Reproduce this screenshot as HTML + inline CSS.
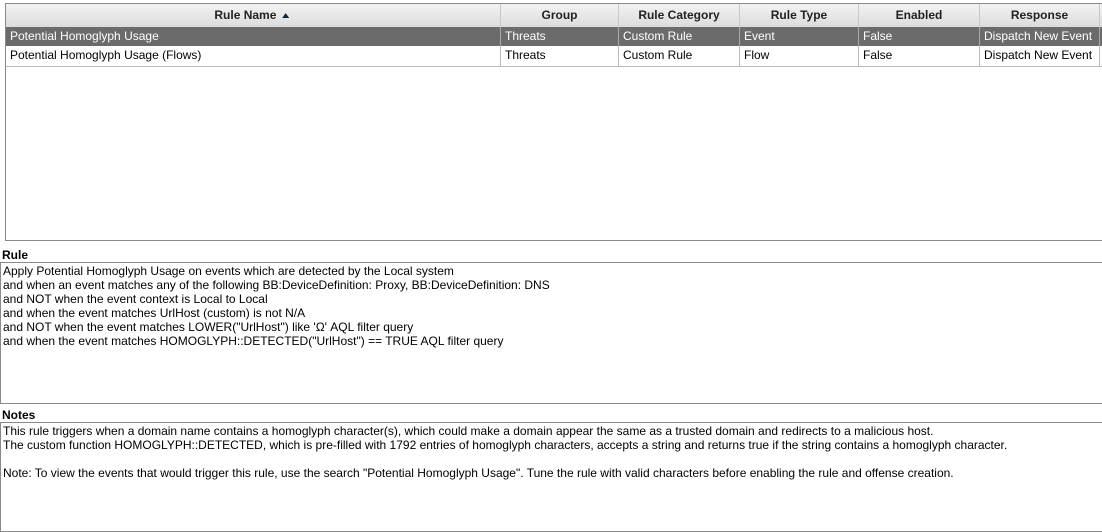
<!DOCTYPE html>
<html><head><style>
body{margin:0;width:1102px;height:516px;background:#fff;font-family:"Liberation Sans",Arial,sans-serif;font-size:12px;color:#000;position:relative;overflow:hidden}
.tbl{position:absolute;left:5px;top:3px;width:1097px;height:238px;border:1px solid #8a8a8a;border-right:none;box-sizing:border-box}
.row{position:absolute;left:0;height:19px;width:1096px}
.c{position:absolute;top:0;height:100%;box-sizing:border-box;border-right:1px solid #bbb;padding-left:4px;line-height:19px;white-space:nowrap}
.hdr{top:0;height:23px;background:linear-gradient(#f2f2f2,#dcdcdc);border-bottom:1px solid #aaa;font-weight:bold;color:#222;font-size:12px}
.hdr .c{text-align:center;padding:0;line-height:22px;border-right:1px solid #c8c8c8}
.sel{top:23px;background:#6b6b6b;color:#fff}
.sel .c{border-right:1px solid #aaa}
.r2{top:42px;border-bottom:1px solid #bbb;height:20px}
.lbl{position:absolute;left:2px;font-weight:bold;font-size:12px}
.box{position:absolute;left:0;width:1102px;border:1px solid #8a8a8a;border-right:none;box-sizing:border-box;padding:1px 2px;line-height:14px;font-size:12px}
</style></head><body>
<div class="tbl">
<div class="row hdr">
<div class="c" style="left:0;width:495px">Rule Name <span style="font-size:12px;color:#123;display:inline-block;transform:scaleY(0.7)">&#9650;</span></div>
<div class="c" style="left:495px;width:118px">Group</div>
<div class="c" style="left:613px;width:121px">Rule Category</div>
<div class="c" style="left:734px;width:119px">Rule Type</div>
<div class="c" style="left:853px;width:121px">Enabled</div>
<div class="c" style="left:974px;width:120px">Response</div>
</div>
<div class="row sel">
<div class="c" style="left:0;width:495px">Potential Homoglyph Usage</div>
<div class="c" style="left:495px;width:118px">Threats</div>
<div class="c" style="left:613px;width:121px">Custom Rule</div>
<div class="c" style="left:734px;width:119px">Event</div>
<div class="c" style="left:853px;width:121px">False</div>
<div class="c" style="left:974px;width:120px">Dispatch New Event</div>
</div>
<div class="row r2">
<div class="c" style="left:0;width:495px">Potential Homoglyph Usage (Flows)</div>
<div class="c" style="left:495px;width:118px">Threats</div>
<div class="c" style="left:613px;width:121px">Custom Rule</div>
<div class="c" style="left:734px;width:119px">Flow</div>
<div class="c" style="left:853px;width:121px">False</div>
<div class="c" style="left:974px;width:120px">Dispatch New Event</div>
</div>
</div>
<div class="lbl" style="top:248px">Rule</div>
<div class="box" style="top:262px;height:142px">Apply Potential Homoglyph Usage on events which are detected by the Local system<br>and when an event matches any of the following BB:DeviceDefinition: Proxy, BB:DeviceDefinition: DNS<br>and NOT when the event context is Local to Local<br>and when the event matches UrlHost (custom) is not N/A<br>and NOT when the event matches LOWER("UrlHost") like 'Ω' AQL filter query<br>and when the event matches HOMOGLYPH::DETECTED("UrlHost") == TRUE AQL filter query</div>
<div class="lbl" style="top:408px">Notes</div>
<div class="box" style="top:422px;height:110px">This rule triggers when a domain name contains a homoglyph character(s), which could make a domain appear the same as a trusted domain and redirects to a malicious host.<br>The custom function HOMOGLYPH::DETECTED, which is pre-filled with 1792 entries of homoglyph characters, accepts a string and returns true if the string contains a homoglyph character.<br><br>Note: To view the events that would trigger this rule, use the search "Potential Homoglyph Usage". Tune the rule with valid characters before enabling the rule and offense creation.</div>
</body></html>
